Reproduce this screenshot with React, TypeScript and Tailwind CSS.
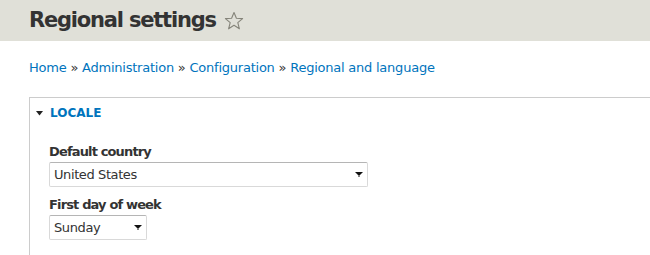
const font = "font-['DejaVu_Sans',Verdana,sans-serif]";

function Star() {
  return (
    <svg width="20" height="20" viewBox="0 0 20 20" className="ml-[8px] mt-[1px]">
      <polygon
        points="10,1.5 12.4,7.3 18.6,7.6 13.8,11.6 15.4,17.8 10,14.3 4.6,17.8 6.2,11.6 1.4,7.6 7.6,7.3"
        fill="none"
        stroke="#85847a"
        strokeWidth="1.1"
        strokeLinejoin="round"
      />
    </svg>
  );
}

function Arrow() {
  return (
    <svg width="8" height="5" viewBox="0 0 8 5">
      <path d="M0 0h8L4 4z M3.5 4h1v1h-1z" fill="#111" />
    </svg>
  );
}

function Select({ value, width }: { value: string; width: string }) {
  return (
    <div
      className={`${width} flex h-[25px] items-center justify-between rounded-[2px] border border-[#d9d9d9] border-t-[#b5b5b5] bg-white pl-[4px] pr-[4px] text-[13px] tracking-[-0.4px] text-[#333]`}
    >
      <span>{value}</span>
      <Arrow />
    </div>
  );
}

export default function App() {
  return (
    <div className={`${font} h-[255px] w-[650px] overflow-hidden bg-white`}>
      <div className="flex h-[41px] items-center bg-[#e0e0d8] pl-[29px]">
        <h1 className="text-[21px] font-bold leading-none tracking-[-1.2px] text-[#333]">Regional settings</h1>
        <Star />
      </div>

      <div className="pl-[29px] pt-[18px] text-[13px] leading-[18px] tracking-[-0.23px] text-[#0074bd]">
        <a>Home</a>
        <span className="text-[#333]"> » </span>
        <a>Administration</a>
        <span className="text-[#333]"> » </span>
        <a>Configuration</a>
        <span className="text-[#333]"> » </span>
        <a>Regional and language</a>
      </div>

      <div className="ml-[29px] mt-[20px] h-[200px] border-l border-t border-[#ccc]">
        <div className="flex items-center pl-[6px] pt-[8px]">
          <svg width="7" height="5" viewBox="0 0 7 5">
            <path d="M0 0h7L3.5 4.5z" fill="#222" />
          </svg>
          <span className="ml-[7px] text-[12px] font-bold leading-[14px] text-[#0074bd]">LOCALE</span>
        </div>

        <div className="pl-[19px] pt-[24px]">
          <div className="text-[13px] font-bold leading-[16px] tracking-[-0.85px] text-[#333]">Default country</div>
          <div className="mt-[2px]">
            <Select value="United States" width="w-[319px]" />
          </div>
          <div className="mt-[10px] text-[13px] font-bold leading-[16px] tracking-[-0.85px] text-[#333]">First day of week</div>
          <div className="mt-[2px]">
            <Select value="Sunday" width="w-[98px]" />
          </div>
        </div>
      </div>
    </div>
  );
}
